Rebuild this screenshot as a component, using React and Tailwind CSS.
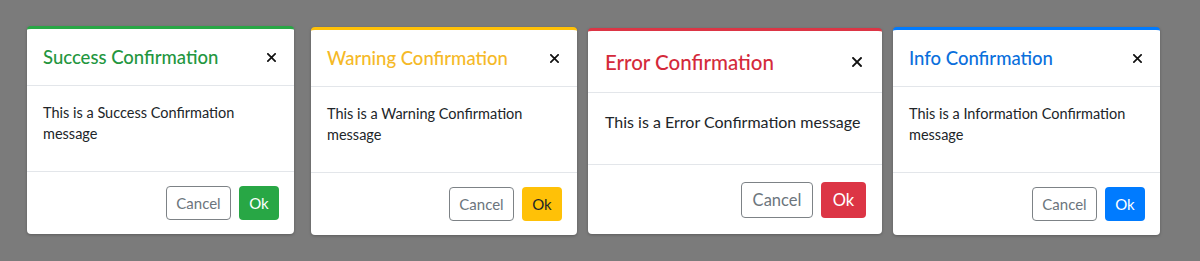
import React from 'react';

const font = { fontFamily: 'Lato, "Open Sans", sans-serif' };

function CloseIcon({ size }) {
  return (
    <svg width={size} height={size} viewBox="0 0 10 10" fill="none">
      <path d="M1 1L9 9M9 1L1 9" stroke="#111" strokeWidth="1.9" strokeLinecap="square" />
    </svg>
  );
}

function SmallDialog({ title, message, accent, titleColor, okClass, className }) {
  return (
    <div className={`bg-white rounded-[4px] overflow-hidden border-t-[3px] shadow-[0_1px_3px_rgba(0,0,0,0.25)] ${accent} ${className}`}>
      <div className="h-[57px] flex items-center justify-between pl-[16px] pr-[18px] border-b border-[#e3e6ea]">
        <h5 className={`text-[18.5px] font-medium leading-none pt-[1px] ${titleColor}`}>{title}</h5>
        <CloseIcon size={9} />
      </div>
      <div className="h-[85px] px-[16px] pt-[16px] text-[14.5px] leading-[21px] text-[#212529]">
        {message}
      </div>
      <div className="h-[63px] border-t border-[#e3e6ea] flex justify-end items-start gap-[8px] pr-[15px] pt-[14px]">
        <button className="w-[65px] h-[34px] rounded-[4px] border border-[#7d8286] text-[#6c757d] text-[15px] bg-white">
          Cancel
        </button>
        <button className={`w-[40px] h-[34px] rounded-[4px] text-[15px] ${okClass}`}>Ok</button>
      </div>
    </div>
  );
}

function LargeDialog() {
  return (
    <div className="w-[294px] mt-[2px] ml-[11px] bg-white rounded-[4px] overflow-hidden border-t-[3px] border-[#dc3545] shadow-[0_1px_3px_rgba(0,0,0,0.25)]">
      <div className="h-[62px] flex items-center justify-between pl-[17px] pr-[20px] border-b border-[#e3e6ea]">
        <h5 className="text-[20.5px] font-medium leading-none pt-[1px] text-[#d42a3b]">Error Confirmation</h5>
        <CloseIcon size={10} />
      </div>
      <div className="h-[71px] px-[17px] pt-[17px] text-[16px] leading-[24px] text-[#212529] whitespace-nowrap">
        This is a Error Confirmation message
      </div>
      <div className="h-[70px] border-t border-[#e3e6ea] flex justify-end items-start gap-[8px] pr-[16px] pt-[17px]">
        <button className="w-[72px] h-[36px] rounded-[4px] border border-[#7d8286] text-[#6c757d] text-[16.5px] bg-white">
          Cancel
        </button>
        <button className="w-[45px] h-[36px] rounded-[4px] text-[16.5px] bg-[#dc3545] text-white">Ok</button>
      </div>
    </div>
  );
}

export default function App() {
  return (
    <div className="w-[1200px] h-[261px] bg-[#7b7b7b] flex items-start pl-[27px] pt-[26px]" style={font}>
      <SmallDialog
        title="Success Confirmation"
        message="This is a Success Confirmation message"
        accent="border-[#28a745]"
        titleColor="text-[#23963e]"
        okClass="bg-[#28a745] text-white"
        className="w-[267px]"
      />
      <SmallDialog
        title="Warning Confirmation"
        message="This is a Warning Confirmation message"
        accent="border-[#ffc107]"
        titleColor="text-[#f5b927]"
        okClass="bg-[#ffc107] text-[#212529]"
        className="w-[266px] mt-[1px] ml-[17px]"
      />
      <LargeDialog />
      <SmallDialog
        title="Info Confirmation"
        message="This is a Information Confirmation message"
        accent="border-[#007bff]"
        titleColor="text-[#0a6fdc]"
        okClass="bg-[#007bff] text-white"
        className="w-[267px] mt-[1px] ml-[11px]"
      />
    </div>
  );
}
